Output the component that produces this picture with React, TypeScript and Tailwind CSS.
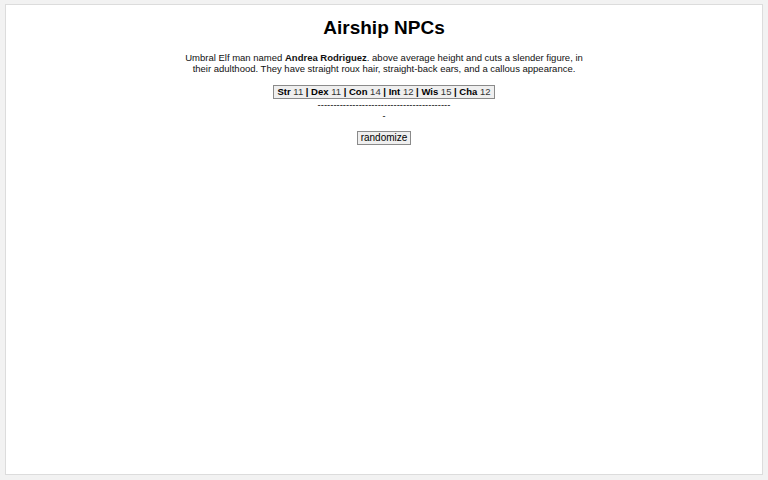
const stats = [
  { label: 'Str', value: 11 },
  { label: 'Dex', value: 11 },
  { label: 'Con', value: 14 },
  { label: 'Int', value: 12 },
  { label: 'Wis', value: 15 },
  { label: 'Cha', value: 12 },
]

export default function App() {
  return (
    <div className="min-h-[480px] bg-[#f2f2f2] p-[4px_5px_5px_5px] font-['Liberation_Sans',Arial,sans-serif] text-black">
      <div className="flex h-[471px] flex-col items-center border border-[#dcdcdc] bg-white">
        <h1 className="mt-[12px] text-[19px] font-bold leading-[22px]">Airship NPCs</h1>
        <p className="mt-[13px] w-[406px] text-center text-[9.5px] leading-[11px] text-[#111]">
          Umbral Elf man named <b>Andrea Rodriguez</b>. above average height and cuts a slender figure, in their
          adulthood. They have straight roux hair, straight-back ears, and a callous appearance.
        </p>
        <div className="mt-[11px] border border-[#8a8a8a] bg-[#efefef] px-[3px] text-[9.5px] leading-[12px]">
          {stats.map((s, i) => (
            <span key={s.label}>
              {i > 0 && <b> | </b>}
              <b>{s.label}</b> <span className="text-[#333]">{s.value}</span>
            </span>
          ))}
        </div>
        <div className="mt-[1px] text-[9.5px] leading-[10px]">------------------------------------------</div>
        <div className="text-[9px] leading-[12px]">-</div>
        <button className="mt-[9px] border border-[#8a8a8a] bg-[#efefef] px-[3px] text-[10px] leading-[12px]">
          randomize
        </button>
      </div>
    </div>
  )
}
